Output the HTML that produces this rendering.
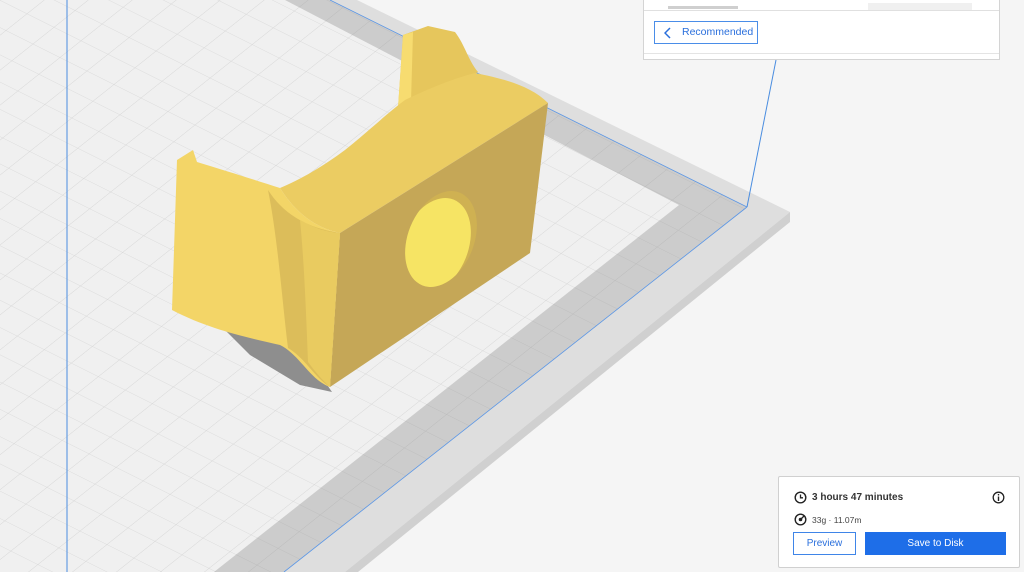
<!DOCTYPE html>
<html><head><meta charset="utf-8"><style>
*{margin:0;padding:0;box-sizing:border-box}
body{width:1024px;height:572px;overflow:hidden;background:#f5f5f5;font-family:"Liberation Sans",sans-serif;position:relative}
svg{position:absolute;left:0;top:0}
.panel{position:absolute;left:643px;top:-2px;width:357px;height:62px;background:#fff;border:1px solid #d4d4d4;border-top:none}
.rec{position:absolute;left:10px;top:23px;width:104px;height:23px;border:1px solid #4a8de8;color:#2a6fdc;font-size:10.5px;line-height:21px;padding-left:27px}
.rec svg{left:9px;top:5px}
.card{position:absolute;left:778px;top:476px;width:242px;height:92px;background:#fff;border:1px solid #d0d0d0;border-radius:2px}
.t1{position:absolute;left:33px;top:15px;font-size:10px;font-weight:bold;color:#333}
.t2{position:absolute;left:33px;top:38px;font-size:8.5px;color:#444}
.btn1{position:absolute;left:14px;top:55px;width:63px;height:23px;border:1px solid #3f85e8;color:#2a6fdc;font-size:10px;text-align:center;line-height:21px}
.btn2{position:absolute;left:86px;top:55px;width:141px;height:23px;background:#1e6ee8;color:#fff;font-size:10px;text-align:center;line-height:23px}
</style></head><body>
<svg width="1024" height="572" viewBox="0 0 1024 572">
<defs>
<pattern id="g" width="27" height="27" patternUnits="userSpaceOnUse" patternTransform="matrix(1,0.5,-0.78,0.62,0,0)">
<rect width="27" height="27" fill="#f0f0f0"/>
<path d="M0 0H27M0 0V27" stroke="#d4d4d4" stroke-width="0.8" fill="none"/>
</pattern>
<pattern id="g2" width="27" height="27" patternUnits="userSpaceOnUse" patternTransform="matrix(1,0.5,-0.78,0.62,0,0)">
<rect width="27" height="27" fill="#cccccc"/>
<path d="M0 0H27M0 0V27" stroke="#bababa" stroke-width="0.8" fill="none"/>
</pattern>
<clipPath id="hc"><ellipse cx="441" cy="239" rx="33" ry="50" transform="rotate(22 441 239)"/></clipPath>
</defs>
<!-- rim -->
<polygon points="357,0 790,212 345,572 0,572 0,0" fill="#dedede"/>
<polygon points="790,212 790,222 358,572 345,572" fill="#d0d0d0"/>
<!-- grid + dark band -->
<polygon points="0,0 330,0 747,207 284,572 0,572" fill="url(#g2)"/>
<polygon points="0,0 285,0 679,205 214,572 0,572" fill="url(#g)"/>
<line x1="67" y1="0" x2="67" y2="572" stroke="#4a8de0" stroke-width="1"/>
<line x1="330" y1="0" x2="747" y2="207" stroke="#5a96e6" stroke-width="0.8"/>
<line x1="747" y1="207" x2="284" y2="572" stroke="#5a96e6" stroke-width="0.8"/>
<line x1="776" y1="60" x2="747" y2="207" stroke="#4a8de0" stroke-width="1"/>
<!-- shadow -->
<polygon points="215,320 300,345 332,392 300,385 250,355" fill="#8e8e8e"/>
<!-- back upright -->
<path d="M398,108 L403,35 L428,26 L455,32 C465,45 468,60 478,72 L440,95 Z" fill="#e6c65c"/>
<polygon points="403,35 413,32 411,102 398,108" fill="#f7dc70"/>
<!-- top face -->
<path d="M280,188 C300,180 325,165 345,150 C370,130 385,115 405,100 C430,88 455,78 475,73 C500,78 530,85 548,103 L340,233 C315,228 295,212 280,188 Z" fill="#ebcc62"/>
<!-- front face -->
<polygon points="340,233 548,103 530,253 330,387" fill="#c5a757"/>
<!-- left C face -->
<path d="M177,160 L193,150 L197,162 C230,172 255,180 280,188 C295,212 315,228 340,233 L330,387 C310,380 300,355 280,345 C250,338 210,330 172,310 Z" fill="#f3d567"/>
<path d="M268,190 C282,212 305,228 340,233 L330,387 C315,378 305,358 288,348 C282,300 278,240 268,190Z" fill="#dcbd5a"/>
<path d="M300,220 C315,228 325,232 340,233 L330,387 C320,378 314,370 308,362 C306,310 304,260 300,220Z" fill="#e9cb60"/>
<!-- hole -->
<ellipse cx="441" cy="239" rx="33" ry="50" transform="rotate(22 441 239)" fill="#cfb152"/>
<g clip-path="url(#hc)"><ellipse cx="435" cy="246" rx="33" ry="50" transform="rotate(22 435 246)" fill="#f6e464"/></g>
</svg>
<div class="panel">
<div style="position:absolute;left:24px;top:8px;width:70px;height:3px;background:#cfcfcf"></div>
<div style="position:absolute;left:224px;top:5px;width:104px;height:8px;background:#f0f0f0"></div>
<div style="position:absolute;left:0;top:12px;width:355px;border-top:1px solid #e0e0e0"></div>
<div style="position:absolute;left:0;top:55px;width:355px;border-top:1px solid #e4e4e4"></div>
<div class="rec"><svg width="8" height="12" viewBox="0 0 8 12"><path d="M6 1L1 6L6 11" stroke="#2a6fdc" stroke-width="1.5" fill="none"/></svg>Recommended</div>
</div>
<div class="card">
<svg style="left:15px;top:14px" width="13" height="13" viewBox="0 0 13 13"><circle cx="6.5" cy="6.5" r="5.3" stroke="#222" stroke-width="1.4" fill="none"/><path d="M6.5 3.5V6.8H9" stroke="#222" stroke-width="1.3" fill="none"/></svg>
<div class="t1">3 hours 47 minutes</div>
<svg style="left:213px;top:14px" width="13" height="13" viewBox="0 0 13 13"><circle cx="6.5" cy="6.5" r="5.3" stroke="#222" stroke-width="1.3" fill="none"/><path d="M6.5 5.5V10" stroke="#222" stroke-width="1.4"/><circle cx="6.5" cy="3.7" r="0.8" fill="#222"/></svg>
<svg style="left:15px;top:36px" width="13" height="13" viewBox="0 0 13 13"><circle cx="6.5" cy="6.5" r="5.3" stroke="#222" stroke-width="1.4" fill="none"/><circle cx="6.5" cy="6.5" r="1.8" fill="#222"/><path d="M6.5 6.5L10 3" stroke="#222" stroke-width="1.3"/></svg>
<div class="t2">33g · 11.07m</div>
<div class="btn1">Preview</div>
<div class="btn2">Save to Disk</div>
</div>
</body></html>
